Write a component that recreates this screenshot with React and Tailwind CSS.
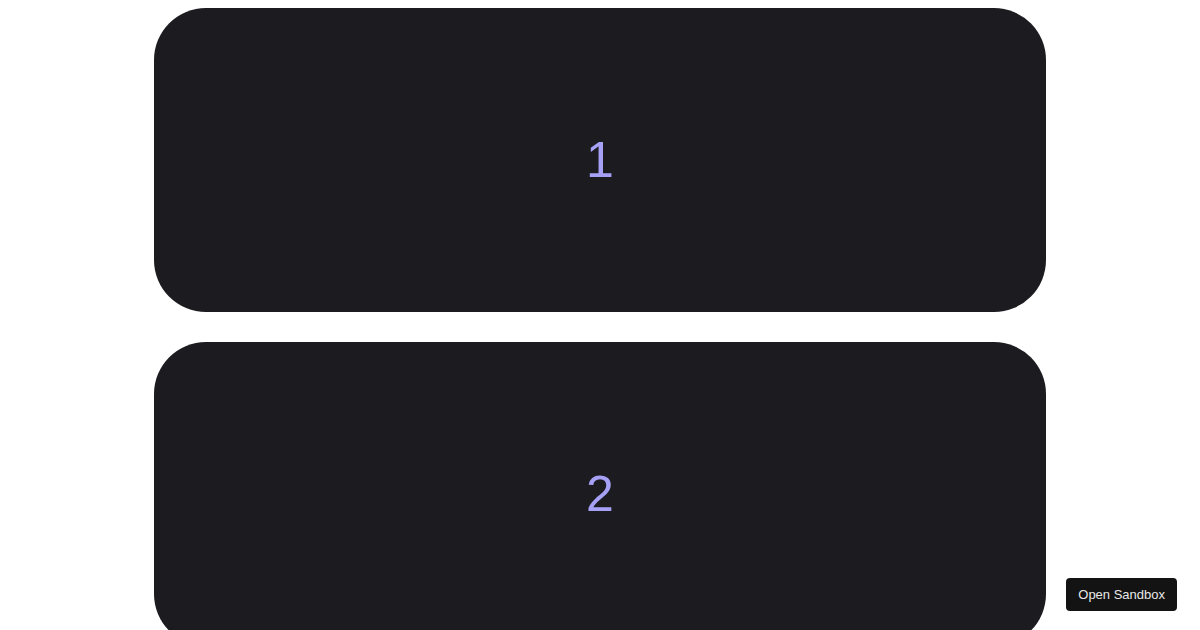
export default function App() {
  const items = [1, 2];
  return (
    <div className="min-h-screen bg-white pt-2 font-['Liberation_Sans',Arial,sans-serif]">
      <div className="mx-auto flex w-[892px] flex-col gap-[30px]">
        {items.map((n) => (
          <div
            key={n}
            className="flex h-[304px] items-center justify-center rounded-[52px] bg-[#1c1b20]"
          >
            <span className="text-[50px] leading-none text-[#a6a1f7]">{n}</span>
          </div>
        ))}
      </div>
      <button className="fixed bottom-[19px] right-[23px] h-[33px] rounded-[4px] bg-[#131313] px-[12px] text-[13px] text-[#e8e8e8]">
        Open Sandbox
      </button>
    </div>
  );
}
